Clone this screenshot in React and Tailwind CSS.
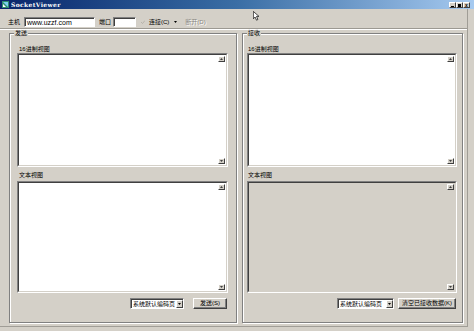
import React from "react";

const FONT = "font-['Liberation_Sans','Noto_Sans_CJK_SC',sans-serif]";

function ScrollBtn({ up }) {
  return (
    <div className="w-[7px] h-[6px] bg-[#d4d0c8] border border-t-white border-l-white border-r-[#404040] border-b-[#404040] flex items-center justify-center">
      <svg width="3" height="2" viewBox="0 0 3 2">
        {up ? <path d="M0 2 L1.5 0 L3 2 Z" fill="#404040" /> : <path d="M0 0 L1.5 2 L3 0 Z" fill="#404040" />}
      </svg>
    </div>
  );
}

function TextBox({ h, gray }) {
  return (
    <div
      className={
        "border-t border-l border-t-[#808080] border-l-[#808080] border-b border-r border-b-white border-r-white " +
        h
      }
    >
      <div
        className={
          "h-full w-full border-t border-l border-t-[#404040] border-l-[#404040] border-b border-r border-b-[#d4d0c8] border-r-[#d4d0c8] flex " +
          (gray ? "bg-[#d4d0c8]" : "bg-white")
        }
      >
        <div className="flex-1" />
        <div className="w-[7px] flex flex-col justify-between py-[1px] mr-[1px]">
          <ScrollBtn up />
          <ScrollBtn />
        </div>
      </div>
    </div>
  );
}

function Select({ w }) {
  return (
    <div
      className={
        "h-[11px] border-t border-l border-t-[#808080] border-l-[#808080] border-b border-r border-b-white border-r-white " +
        w
      }
    >
      <div className="h-full w-full bg-white flex items-center border-t border-l border-t-[#404040] border-l-[#404040]">
        <span className="flex-1 pl-[1px] text-[6px] leading-[7px] whitespace-nowrap overflow-hidden">系统默认编码页</span>
        <div className="w-[7px] h-[8px] bg-[#d4d0c8] border border-t-white border-l-white border-r-[#404040] border-b-[#404040] flex items-center justify-center">
          <svg width="3" height="2" viewBox="0 0 3 2">
            <path d="M0 0 L1.5 2 L3 0 Z" fill="#000" />
          </svg>
        </div>
      </div>
    </div>
  );
}

function Button({ w, children }) {
  return (
    <div
      className={
        "h-[11px] bg-[#d4d0c8] border border-t-white border-l-white border-r-[#404040] border-b-[#404040] shadow-[inset_-1px_-1px_0_#808080] flex items-center justify-center text-[6px] leading-[7px] whitespace-nowrap " +
        w
      }
    >
      {children}
    </div>
  );
}

function Group({ title, className, children }) {
  return (
    <div
      className={
        "relative border border-[#808080] shadow-[inset_1px_1px_0_#fff,1px_1px_0_#fff] flex flex-col " + className
      }
    >
      <span className="absolute top-[-4px] left-[4px] bg-[#d4d0c8] px-[1px] text-[6px] leading-[7px]">{title}</span>
      {children}
    </div>
  );
}

export default function App() {
  return (
    <div className={"w-[474px] h-[331px] bg-[#d4d0c8] flex flex-col overflow-hidden relative text-black " + FONT}>
      {/* title bar */}
      <div className="h-[9px] bg-gradient-to-r from-[#0a246a] via-[#3a6ea5] to-[#a6caf0] flex items-center pl-[2px] pr-[4px]">
        <svg width="7" height="7" viewBox="0 0 7 7">
          <rect x="0" y="0" width="7" height="7" fill="#2f8f6f" />
          <path d="M1 1 L6 1 L6 6 Z" fill="#7ad0f0" />
          <path d="M1 3 L4 6 L1 6 Z" fill="#ffffff" />
        </svg>
        <span className="ml-[2px] text-[6px] leading-[7px] font-bold text-white tracking-[0.35px] font-['DejaVu_Serif',serif]">
          SocketViewer
        </span>
        <div className="flex-1" />
        <div className="flex gap-[0px] mt-[1px]">
          {["min", "max", "close"].map((k) => (
            <div
              key={k}
              className="w-[7px] h-[6px] bg-[#d4d0c8] border border-t-white border-l-white border-r-[#404040] border-b-[#404040] flex items-end justify-center"
            >
              {k === "min" && <div className="w-[3px] h-[1px] bg-black mb-[0px]" />}
              {k === "max" && <div className="w-[3px] h-[3px] border border-black border-t-2 mb-[0px]" />}
              {k === "close" && <span className="text-[5px] leading-[4px] font-bold">x</span>}
            </div>
          ))}
        </div>
      </div>

      <div className="flex-1 flex flex-col pr-[6px] pb-[4px]">
        <div className="flex-1 flex flex-col border-r border-b border-r-[#a09d96] border-b-[#a09d96]">
          {/* toolbar */}
          <div className="mt-[8px] h-[10px] flex items-center pl-[8px] text-[6px] leading-[7px]">
            <span className="w-[14px]">主机</span>
            <div className="ml-[2px] w-[71px] h-[10px] border-t border-l border-t-[#808080] border-l-[#808080] border-b border-r border-b-white border-r-white">
              <div className="h-full bg-white border-t border-l border-t-[#404040] border-l-[#404040] flex items-center pl-[1px] text-[7px] leading-[8px]">
                www.uzzf.com
              </div>
            </div>
            <span className="ml-[4px]">端口</span>
            <div className="ml-[2px] w-[23px] h-[10px] border-t border-l border-t-[#808080] border-l-[#808080] border-b border-r border-b-white border-r-white">
              <div className="h-full bg-white border-t border-l border-t-[#404040] border-l-[#404040]" />
            </div>
            <svg className="ml-[5px]" width="4" height="4" viewBox="0 0 4 4">
              <path d="M0 2 L1.5 3.5 L4 0.5" stroke="#b0aca4" strokeWidth="0.8" fill="none" />
            </svg>
            <span className="ml-[4px]">连接(C)</span>
            <svg className="ml-[5px]" width="3" height="2" viewBox="0 0 3 2">
              <path d="M0 0 L1.5 2 L3 0 Z" fill="#000" />
            </svg>
            <span className="ml-[8px] text-[#8a8883] [text-shadow:1px_1px_0_#fff]">断开(D)</span>
          </div>
          {/* separator */}
          <div className="mt-[1px] h-[1px] bg-[#9c9992]" />
          <div className="h-[1px] bg-white" />

          {/* groups */}
          <div className="mt-[3px] h-[290px] flex pl-[9px] pr-[4px] gap-[5px]">
            <Group title="发送" className="w-[228px] pl-[7px] pr-[8px] pt-[12px]">
              <span className="ml-[2px] h-[7px] text-[6px] leading-[7px]">16进制视图</span>
              <TextBox h="h-[114px]" />
              <span className="ml-[2px] mt-[5px] h-[7px] text-[6px] leading-[7px]">文本视图</span>
              <div className="mt-[2px]">
                <TextBox h="h-[112px]" />
              </div>
              <div className="mt-[5px] flex justify-end items-center pr-[1px]">
                <Select w="w-[54px]" />
                <div className="ml-[9px]">
                  <Button w="w-[34px]">发送(S)</Button>
                </div>
              </div>
            </Group>
            <Group title="接收" className="flex-1 pl-[4px] pr-[5px] pt-[12px]">
              <span className="ml-[1px] h-[7px] text-[6px] leading-[7px]">16进制视图</span>
              <TextBox h="h-[114px]" />
              <span className="ml-[1px] mt-[5px] h-[7px] text-[6px] leading-[7px]">文本视图</span>
              <div className="mt-[2px]">
                <TextBox h="h-[112px]" gray />
              </div>
              <div className="mt-[5px] flex justify-end items-center pr-[1px]">
                <Select w="w-[57px]" />
                <div className="ml-[4px]">
                  <Button w="w-[58px]">清空已接收数据(K)</Button>
                </div>
              </div>
            </Group>
          </div>
        </div>
      </div>

      {/* mouse cursor */}
      <svg className="absolute left-[253px] top-[11px]" width="7" height="10" viewBox="0 0 10 14">
        <path d="M0.5 0.5 L0.5 11 L3 8.5 L5 13 L7 12 L5 7.5 L8.5 7.5 Z" fill="#fff" stroke="#000" strokeWidth="1" />
      </svg>
    </div>
  );
}
